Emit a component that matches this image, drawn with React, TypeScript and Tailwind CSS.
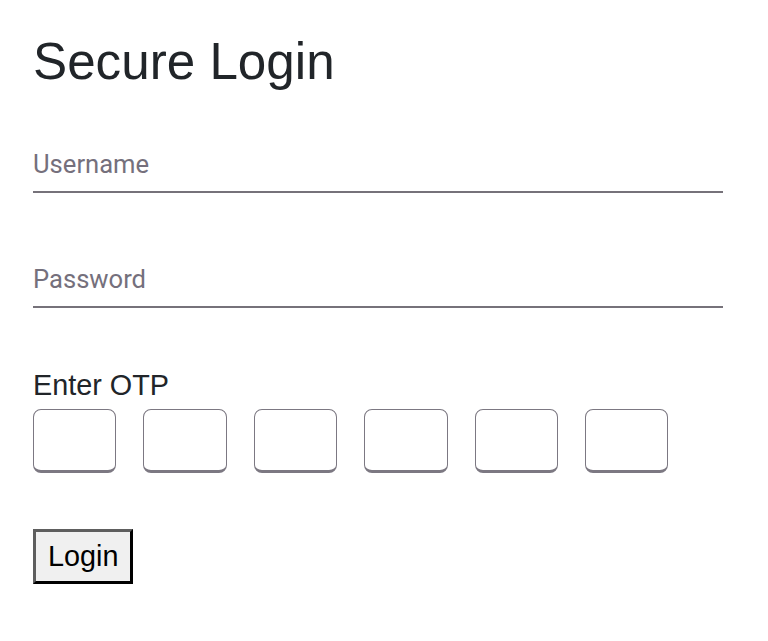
import React from "react"

const otpSlots = [0, 1, 2, 3, 4, 5]

export default function App() {
  return (
    <div className="min-h-[641px] w-[768px] bg-white pl-[33px] pt-[32px] font-['Liberation_Sans',Arial,sans-serif]">
      <h1 className="text-[51.2px] leading-[59px] text-[#212529]">Secure Login</h1>

      <form className="flex w-[690px] flex-col" onSubmit={(e) => e.preventDefault()}>
        <input
          type="text"
          placeholder="Username"
          className="mt-[50px] block w-full border-b-2 border-[#76727a] bg-transparent pb-[12px] pt-[8px] font-['Roboto',sans-serif] text-[25.6px] leading-[30px] text-[#212529] outline-none placeholder:text-[#75707c]"
        />
        <input
          type="password"
          placeholder="Password"
          className="mt-[62.5px] block w-full border-b-2 border-[#76727a] bg-transparent pb-[12px] pt-[8px] font-['Roboto',sans-serif] text-[25.6px] leading-[30px] text-[#212529] outline-none placeholder:text-[#75707c]"
        />

        <label className="mt-[61px] text-[28.8px] leading-[33px] text-[#212529]">Enter OTP</label>
        <div className="mt-[7.5px] flex gap-[27px]">
          {otpSlots.map((i) => (
            <input
              key={i}
              type="text"
              maxLength={1}
              className="h-[64px] w-[83.4px] rounded-[8px] border-[1.6px] border-b-[3.4px] border-[#7c7882] bg-white text-center text-[25.6px] outline-none"
            />
          ))}
        </div>

        <div className="mt-[55.5px]">
          <button
            type="submit"
            className="border-[3.2px] border-b-black border-l-[#5e5e5e] border-r-black border-t-[#5e5e5e] bg-[#f0f0f0] px-[12px] py-[8px] text-[28.8px] leading-[33px] text-black"
          >
            Login
          </button>
        </div>
      </form>
    </div>
  )
}
